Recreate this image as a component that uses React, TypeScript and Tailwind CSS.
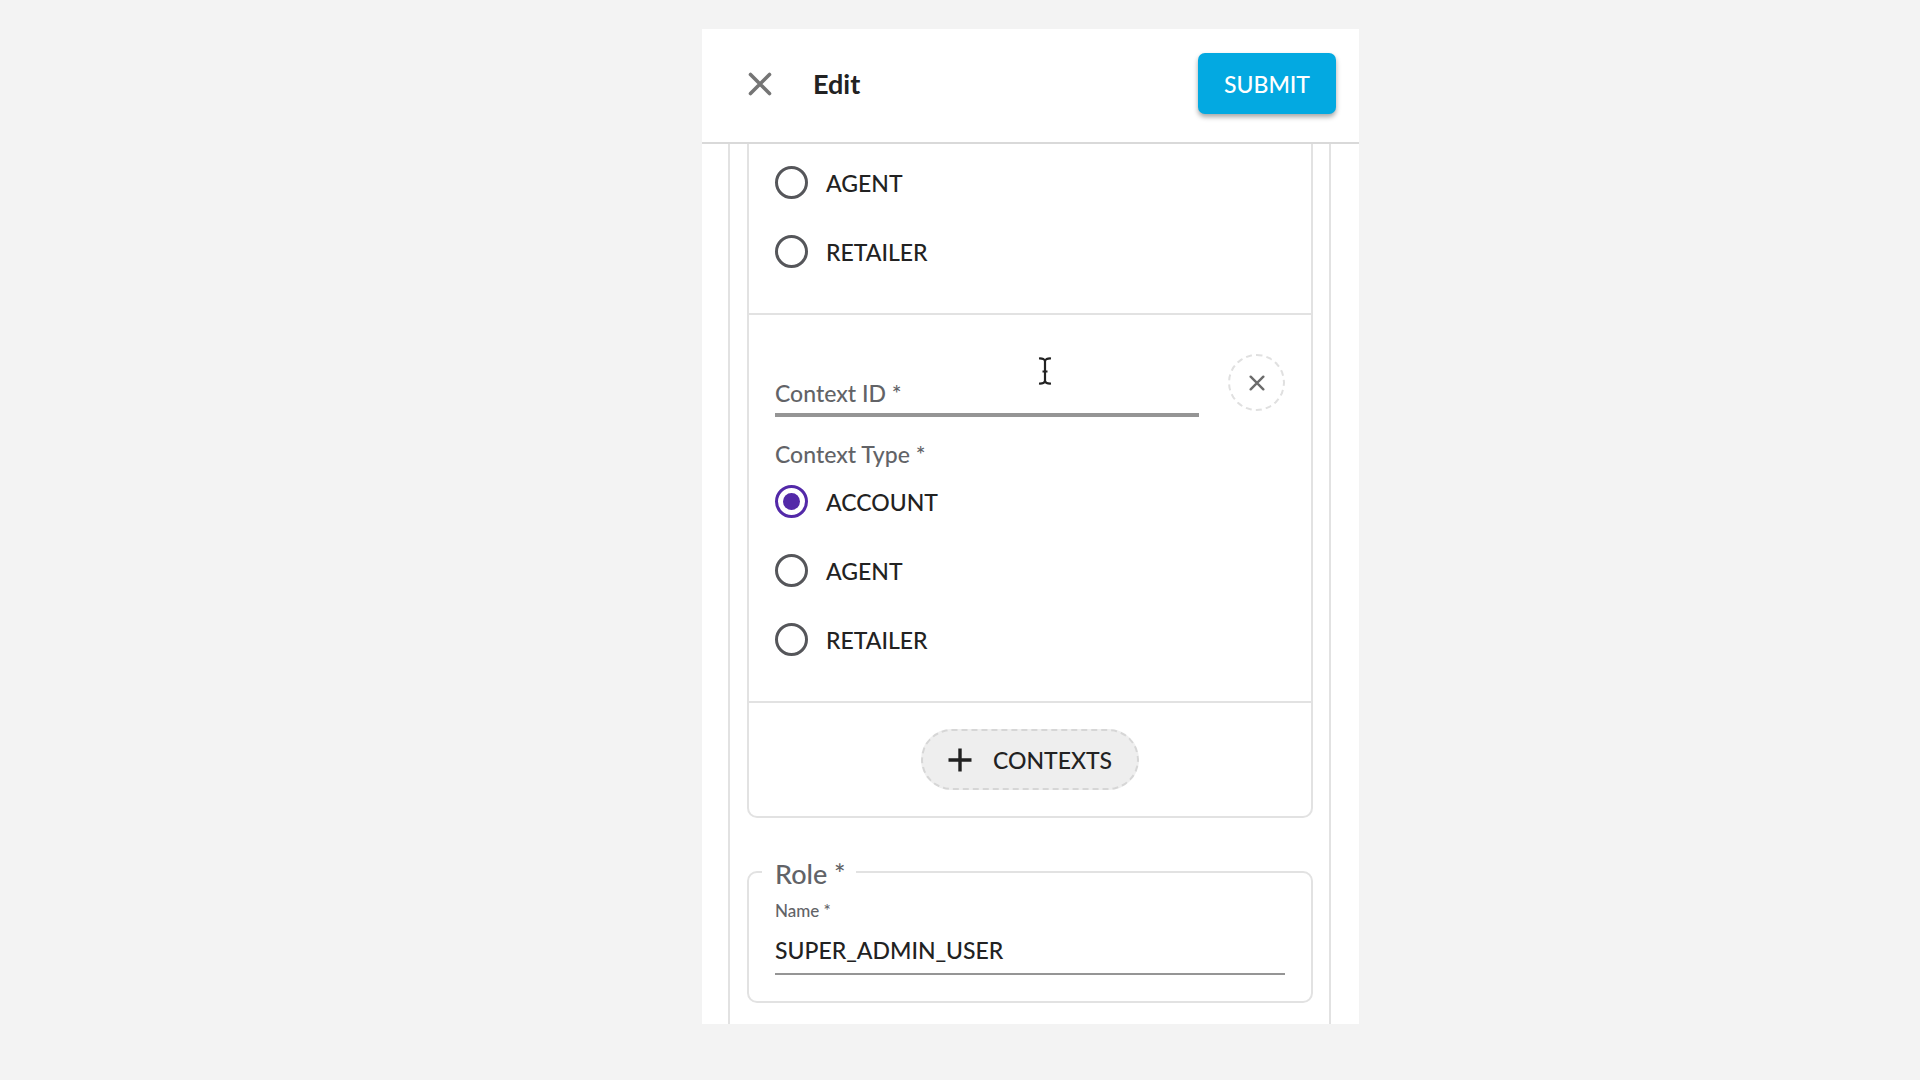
import { useState } from "react";

interface RadioListProps {
    name: string;
    label: string;
    options: string[];
    value: string;
    onChange: (value: string) => void;
}

const CONTEXT_TYPES = ["ACCOUNT", "AGENT", "RETAILER"];

function CloseIcon({ className }: { className: string }) {
    return (
        <svg className={className} viewBox="0 0 24 24" fill="none" stroke="currentColor" strokeWidth="3.6" strokeLinecap="round" aria-hidden="true">
            <path d="M2.5 2.5 21.5 21.5M21.5 2.5 2.5 21.5" />
        </svg>
    );
}

function PlusIcon() {
    return (
        <svg className="size-6" viewBox="0 0 24 24" fill="none" stroke="currentColor" strokeWidth="3.4" aria-hidden="true">
            <path d="M12 0.5V23.5M0.5 12H23.5" />
        </svg>
    );
}

function TextCursor() {
    return (
        <svg className="pointer-events-none absolute top-[3px] left-[263px] h-7 w-[14px]" viewBox="0 0 14 28" fill="none" stroke="#222" strokeWidth="2.2" aria-hidden="true">
            <path d="M1 1.5C4.5 1.3 7 2.2 7 4.5V23.5C7 25.8 4.5 26.7 1 26.5M13 1.5C9.5 1.3 7 2.2 7 4.5M13 26.5C9.5 26.7 7 25.8 7 23.5M4.5 14.5H9.5" />
        </svg>
    );
}

function RadioList({ name, label, options, value, onChange }: RadioListProps) {

    const radioLi = options.map((option: string) => {
        const id = `${name}-${option}`;

        return (
            <li key={id} className="flex h-[69px] items-center">
                <input
                    id={id}
                    type="radio"
                    name={name}
                    checked={value === option}
                    onChange={() => onChange(option)}
                    className="grid size-[33px] shrink-0 appearance-none place-content-center rounded-full border-3 border-[#55565a] before:size-[17px] before:rounded-full checked:border-[#5329a8] checked:before:bg-[#5329a8]"
                />
                <label htmlFor={id} className="pl-[18px] text-[23px] leading-8 font-medium">{option}</label>
            </li>
        );
    });

    return (
        <ul role="radiogroup" aria-label={label}>
            {radioLi}
        </ul>
    );
}

function Header() {
    return (
        <header className="flex h-[115px] shrink-0 items-center border-b-2 border-[#d9d9d9] pr-[23px] pb-1 pl-[46px]">
            <button type="button" aria-label="Close" className="text-[#757575]">
                <CloseIcon className="size-6" />
            </button>
            <h1 className="pl-[41px] text-[27px] leading-9 font-bold">Edit</h1>
            <button type="submit" className="ml-auto h-[61px] rounded-[7px] bg-[#03a9e1] px-[26px] text-[23px] leading-8 font-medium text-white shadow-[0_3px_5px_rgba(0,0,0,0.35)]">
                SUBMIT
            </button>
        </header>
    );
}

function App() {
    const [firstType, setFirstType] = useState("ACCOUNT");
    const [secondType, setSecondType] = useState("ACCOUNT");
    const [contextId, setContextId] = useState("");
    const [roleName, setRoleName] = useState("SUPER_ADMIN_USER");

    return (
        <main className="flex h-screen justify-center bg-[#f3f3f3] pt-[29px] pb-14 pl-[141px] font-['Lato',sans-serif] text-[#222]">
            <form className="flex w-full max-w-[657px] flex-col bg-white" onSubmit={(e) => e.preventDefault()}>
                <Header />
                <div className="min-h-0 flex-1 overflow-hidden pr-7 pl-[26px]">
                    <div className="min-h-full border-x-2 border-[#e2e2e2] pr-4 pl-[17px]">
                        <div className="rounded-b-[10px] border-2 border-t-0 border-[#e2e2e2]">
                            <section className="border-b-2 border-[#e2e2e2] px-[26px] pt-1 pb-[27px]">
                                <RadioList name="first-type" label="Context Type" options={CONTEXT_TYPES.slice(1)} value={firstType} onChange={setFirstType} />
                            </section>

                            <section className="border-b-2 border-[#e2e2e2] px-[26px] pt-[39px] pb-[27px]">
                                <div className="flex gap-[29px]">
                                    <div className="relative grid h-[63px] flex-1 items-end">
                                        <label htmlFor="context-id" className="col-start-1 row-start-1 pb-2 text-[23px] leading-8 font-medium text-[#626367]">
                                            {contextId === "" && "Context ID *"}
                                        </label>
                                        <input
                                            id="context-id"
                                            value={contextId}
                                            onChange={(e) => setContextId(e.target.value)}
                                            className="col-start-1 row-start-1 w-full self-stretch border-b-4 border-[#959595] pt-6 text-[23px] font-medium outline-none"
                                        />
                                        <TextCursor />
                                    </div>
                                    <button type="button" aria-label="Remove context" className="flex size-[57px] items-center justify-center rounded-full border-2 border-dashed border-[#e0e0e0] text-[#6b6b6b]">
                                        <CloseIcon className="size-4" />
                                    </button>
                                </div>
                                <p className="pt-6 text-[23px] leading-[26px] font-medium text-[#626367]">Context Type *</p>
                                <RadioList name="second-type" label="Context Type" options={CONTEXT_TYPES} value={secondType} onChange={setSecondType} />
                            </section>

                            <div className="flex justify-center py-[26px]">
                                <button type="button" className="flex h-[61px] items-center gap-[21px] rounded-full border-2 border-dashed border-[#d6d6d6] bg-[#eee] px-[25px] text-[23px] leading-8 font-medium">
                                    <PlusIcon />
                                    CONTEXTS
                                </button>
                            </div>
                        </div>

                        <fieldset className="mt-[35px] rounded-[10px] border-2 border-[#e2e2e2] pb-[26px]">
                            <legend className="ml-[13px] pt-1 pr-[10px] pl-[13px] text-[27px] leading-[34px] font-medium text-[#626367]">Role *</legend>
                            <div className="flex flex-col px-[26px]">
                                <label htmlFor="role-name" className="mt-2 text-[17px] leading-6 font-medium text-[#626367]">Name *</label>
                                <input
                                    id="role-name"
                                    value={roleName}
                                    onChange={(e) => setRoleName(e.target.value)}
                                    className="h-[52px] w-full border-b-2 border-[#959595] pt-1 text-[23px] font-medium outline-none"
                                />
                            </div>
                        </fieldset>
                    </div>
                </div>
            </form>
        </main>
    );
}

export default App;
